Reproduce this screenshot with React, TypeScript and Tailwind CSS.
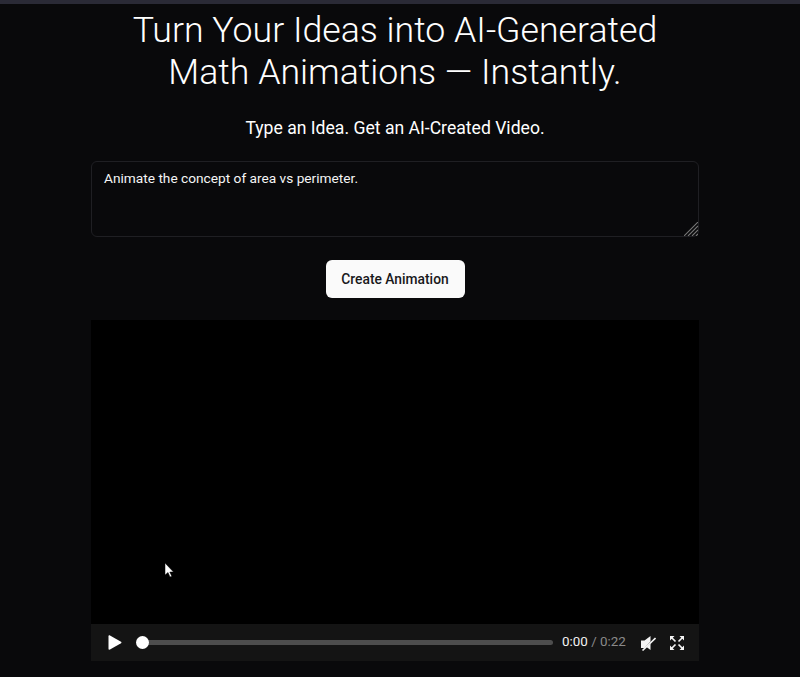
import React from "react";

// Resize grip is drawn by hand so it matches the reference in every browser
function ResizeGrip() {
  return (
    <svg className="absolute bottom-[1px] right-[1px]" width="14" height="14" viewBox="0 0 14 14" fill="none" stroke="#777" strokeWidth="1.1">
      <path d="M14 0 0 14M14 4 4 14M14 8 8 14M14 12 12 14" />
    </svg>
  );
}

function MutedIcon() {
  return (
    <svg width="16" height="16" viewBox="0 0 16 16" fill="#f4f4f4">
      <path d="M1 5.500h3.500L10.500 1v5.500l-6 6.500H1z" />
      <path d="M6.500 12 10.500 8.500V15z" />
      <path d="M15.500 3 2.500 15.500" stroke="#f4f4f4" strokeWidth="1.600" />
    </svg>
  );
}

function FullscreenIcon() {
  return (
    <svg width="14" height="14" viewBox="0 0 14 14" fill="#f4f4f4" stroke="#f4f4f4">
      <path d="M0 0h4.500L0 4.500zM14 0v4.500L9.500 0zM0 14V9.500L4.500 14zM14 14H9.500L14 9.500z" stroke="none" />
      <path d="M1.500 1.500 5.500 5.500M12.500 1.500 8.500 5.500M1.500 12.500 5.500 8.500M12.500 12.500 8.500 8.500" strokeWidth="1.700" fill="none" />
    </svg>
  );
}

function Cursor() {
  return (
    <svg className="absolute left-[73px] top-[242px]" width="11" height="16" viewBox="0 0 11 16">
      <path d="M1 1v12l3-2.500 2 4.500 1.800-.8-2-4.200H9.500z" fill="#fff" stroke="#000" strokeWidth="0.5" />
    </svg>
  );
}

function VideoPlayer() {
  return (
    <div className="relative mt-[22px] w-full bg-black">
      <div className="h-[304px]" />
      <Cursor />
      <div className="flex h-[37px] items-center bg-[#141414] pl-[17px] pr-[15px]">
        <svg className="shrink-0" width="14" height="15" viewBox="0 0 14 15" fill="#fff">
          <path d="M0.500 1.200c0-.8.8-1.200 1.500-.8l11 6.300c.6.4.6 1.200 0 1.600l-11 6.300c-.7.4-1.500 0-1.500-.8z" />
        </svg>
        <div className="relative ml-[15px] h-[5px] w-[416px] shrink-0 rounded-full bg-[#4d4d4d]">
          <div className="absolute left-[-1px] top-[-4px] h-[13px] w-[13px] rounded-full bg-white" />
        </div>
        <span className="ml-[9px] w-[63px] shrink-0 whitespace-nowrap text-[13.4px] text-[#f2f2f2]">
          0:00 <span className="text-[#8a8a8a]">/ 0:22</span>
        </span>
        <div className="ml-[15px] shrink-0">
          <MutedIcon />
        </div>
        <div className="ml-[14px] shrink-0">
          <FullscreenIcon />
        </div>
      </div>
    </div>
  );
}

export default function App() {
  return (
    <div className="min-h-[677px] overflow-hidden bg-[#09090b] text-white [font-family:'Roboto',sans-serif]">
      <div className="h-1 bg-[#2a2a36]" />
      <main className="ml-[91px] flex w-[608px] flex-col items-center">
        <h1 className="mt-[5px] w-[640px] text-center text-[35.7px] font-[350] leading-[42px]">
          Turn Your Ideas into AI-Generated
          <br />
          Math Animations — Instantly.
        </h1>
        <p className="mt-[21px] text-center text-[17.6px] leading-[28px]">Type an Idea. Get an AI-Created Video.</p>
        <div className="relative mt-[19px] w-full">
          <textarea
            readOnly
            value="Animate the concept of area vs perimeter."
            className="block h-[76px] w-full resize-none rounded-md border border-[#1f1f23] bg-transparent px-3 py-[6px] text-[13.7px] leading-[20px] text-[#f5f5f5] outline-none"
          />
          <ResizeGrip />
        </div>
        <button className="mt-[23px] h-[38px] w-[139px] rounded-md bg-[#fafafa] text-[13.8px] font-medium text-[#18181b]">
          Create Animation
        </button>
        <VideoPlayer />
      </main>
    </div>
  );
}
